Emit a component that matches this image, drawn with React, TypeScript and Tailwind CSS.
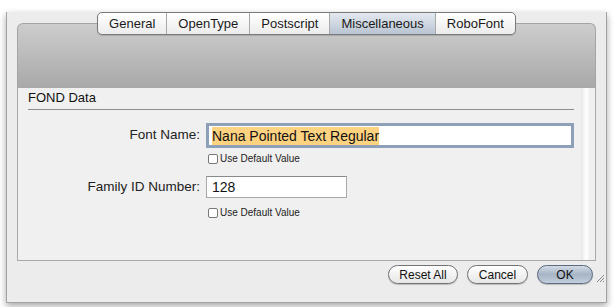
const tabs = ["General", "OpenType", "Postscript", "Miscellaneous", "RoboFont"];

function Tabs() {
  return (
    <div className="relative z-10 mt-[12px] flex justify-center">
      <div className="flex h-[23px] overflow-hidden rounded-[5px] border border-[#7a7a7a] bg-gradient-to-b from-white to-[#ececec] shadow-[0_1px_1px_rgba(0,0,0,0.15)]">
        {tabs.map((t, i) => (
          <div
            key={t}
            className={
              (t === "Miscellaneous"
                ? "bg-gradient-to-b from-[#e4e9f0] to-[#b9c4d2] "
                : "") +
              (i > 0 ? "border-l border-[#a9a9a9] " : "") +
              "flex items-center px-[11px] text-[13px] text-[#1a1a1a]"
            }
          >
            {t}
          </div>
        ))}
      </div>
    </div>
  );
}

function Check({ label }: { label: string }) {
  return (
    <label className="flex items-center gap-[2px] text-[10px] leading-[12px] text-[#222]">
      <span className="h-[10px] w-[10px] rounded-[2px] border border-[#777] bg-white" />
      {label}
    </label>
  );
}

function Btn({
  children,
  primary,
  width,
}: {
  children: string;
  primary?: boolean;
  width: string;
}) {
  return (
    <button
      className={
        (primary
          ? "border-[#5b6b80] bg-gradient-to-b from-[#d2dbe6] via-[#a7b5c6] to-[#c3ceda] "
          : "border-[#727272] bg-gradient-to-b from-white via-[#f2f2f2] to-[#e6e6e6] ") +
        width +
        " flex h-[19px] items-center justify-center rounded-full border text-[12px] text-[#111] shadow-[0_1px_1px_rgba(0,0,0,0.2)]"
      }
    >
      {children}
    </button>
  );
}

export default function App() {
  return (
    <div
      className="h-[307px] w-[614px] bg-white"
      style={{ fontFamily: '"Liberation Sans", Arial, sans-serif' }}
    >
      <div className="ml-[6px] h-[291px] w-[601px] border border-t-0 border-[#a3a3a3] bg-[#ececec] shadow-[0_3px_7px_rgba(0,0,0,0.35)]">
        <div className="px-[10px]">
          <Tabs />
          <div className="-mt-[12px] h-[64px] rounded-t-[6px] border border-b-0 border-[#a4a4a4] bg-gradient-to-b from-[#cdcdcd] to-[#a9a9a9]" />
          <div className="flex h-[174px] border border-[#a9a9a9] bg-[#f0f0f0]">
            <div className="flex-1 pl-[10px] pr-[7px]">
              <div className="pt-[2px] text-[13px] leading-[16px] text-[#111]">
                FOND Data
              </div>
              <div className="mt-[3px] h-px bg-[#8e8e8e]" />
              <div className="mt-[13px] flex items-center">
                <div className="w-[178px] pr-[6px] text-right text-[13.5px] text-[#222]">
                  Font Name:
                </div>
                <div className="flex h-[25px] flex-1 items-center border-[3px] border-[#8ea0b7] bg-white pl-[3px]">
                  <span className="bg-[#fdd280] text-[14px] leading-[18px] text-[#111]">
                    Nana Pointed Text Regular
                  </span>
                </div>
              </div>
              <div className="ml-[180px] mt-[5px]">
                <Check label="Use Default Value" />
              </div>
              <div className="mt-[11px] flex items-center">
                <div className="w-[178px] pr-[6px] text-right text-[13.5px] text-[#222]">
                  Family ID Number:
                </div>
                <div className="flex h-[22px] w-[141px] items-center border border-[#a8a8a8] border-t-[#8a8a8a] bg-white pl-[5px] text-[14px] text-[#111]">
                  128
                </div>
              </div>
              <div className="ml-[180px] mt-[9px]">
                <Check label="Use Default Value" />
              </div>
            </div>
            <div className="w-[10px] bg-gradient-to-r from-[#e6e6e6] via-white to-[#ededed]" />
            <div className="w-[4px]" />
          </div>
          <div className="mt-[4px] flex justify-end gap-[9px] pr-[3px]">
            <Btn width="w-[70px]">Reset All</Btn>
            <Btn width="w-[61px]">Cancel</Btn>
            <Btn width="w-[56px]" primary>
              OK
            </Btn>
          </div>
        </div>
        <div className="relative">
          <svg
            className="absolute bottom-[1px] right-[1px]"
            width="10"
            height="10"
            viewBox="0 0 10 10"
          >
            <path d="M9 2 L2 9 M9 5 L5 9 M9 8 L8 9" stroke="#888" strokeWidth="1" />
          </svg>
        </div>
      </div>
    </div>
  );
}
